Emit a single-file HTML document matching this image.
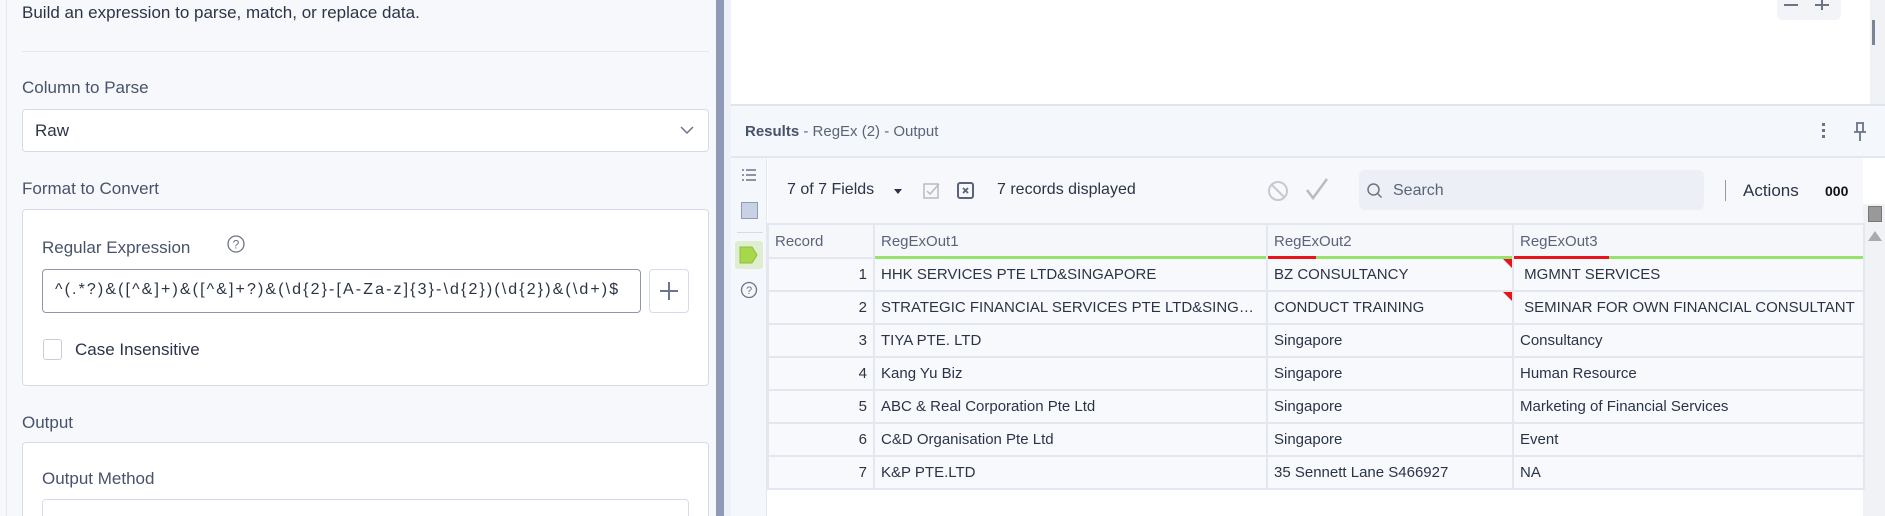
<!DOCTYPE html>
<html><head><style>
*{box-sizing:border-box;margin:0;padding:0}
html,body{width:1885px;height:516px;overflow:hidden}
body{position:relative;background:#fff;font-family:"Liberation Sans",sans-serif;color:#2b3446}
.a{position:absolute}
.lbl{font-size:17px;color:#48536a}
.box{position:absolute;background:#fff;border:1.5px solid #d5dbe8;border-radius:4px}
td{border:2px solid #e2e7f0;font-size:15px;height:33px;padding:0 6px;white-space:nowrap;overflow:hidden;color:#2b3446;background:#f8f9fc}
th{border:2px solid #e2e7f0;font-size:15px;height:34px;padding:0 6px;font-weight:normal;text-align:left;color:#5a6478;background:#f5f7fb;position:relative}
table{border-collapse:collapse;table-layout:fixed}
.ul{position:absolute;bottom:-2px;height:3px}
.tri{position:absolute;right:0;top:0;width:0;height:0;border-top:9px solid #e8141b;border-left:9px solid transparent}
</style></head><body>
<div class="a" style="left:0;top:0;width:716px;height:516px;background:#f6f8fc"></div>
<div class="a" style="left:6px;top:0;width:1px;height:516px;background:#e3e7ef"></div>
<div class="a" style="left:22px;top:3px;font-size:17px;color:#2b3446">Build an expression to parse, match, or replace data.</div>
<div class="a" style="left:22px;top:51px;width:687px;height:1px;background:#e3e7ef"></div>
<div class="a lbl" style="left:22px;top:78px">Column to Parse</div>
<div class="box" style="left:22px;top:109px;width:687px;height:43px"><span class="a" style="left:12px;top:11px;font-size:17px;color:#2b3446">Raw</span>
<svg class="a" style="right:14px;top:15px" width="14" height="10"><path d="M1 2l6 6 6-6" fill="none" stroke="#6b7488" stroke-width="1.5"/></svg></div>
<div class="a lbl" style="left:22px;top:179px">Format to Convert</div>
<div class="box" style="left:22px;top:209px;width:687px;height:177px"></div>
<div class="a lbl" style="left:42px;top:238px">Regular Expression</div>
<svg class="a" style="left:226px;top:234px" width="20" height="20"><circle cx="10" cy="10" r="8" fill="none" stroke="#6b7488" stroke-width="1.3"/><text x="10" y="14.5" font-size="12" text-anchor="middle" fill="#6b7488" font-family="Liberation Sans">?</text></svg>
<div class="box" style="left:42px;top:269px;width:599px;height:44px;border-color:#8e97aa;border-width:1.5px"><span class="a" style="left:12px;top:11px;font-size:16px;color:#2b3446;letter-spacing:2.1px;white-space:nowrap">^(.*?)&amp;([^&amp;]+)&amp;([^&amp;]+?)&amp;(\d{2}-[A-Za-z]{3}-\d{2})(\d{2})&amp;(\d+)$</span></div>
<div class="box" style="left:649px;top:269px;width:40px;height:44px"><svg class="a" style="left:9px;top:11px" width="20" height="20"><path d="M10 1v18M1 10h18" stroke="#6b7488" stroke-width="2"/></svg></div>
<div class="a" style="left:43px;top:339px;width:19px;height:21px;border:1.5px solid #c7cdd9;border-radius:3px;background:#fff"></div>
<div class="a lbl" style="left:75px;top:340px;color:#2b3446">Case Insensitive</div>
<div class="a lbl" style="left:22px;top:413px">Output</div>
<div class="box" style="left:22px;top:442px;width:687px;height:90px"></div>
<div class="a lbl" style="left:42px;top:469px">Output Method</div>
<div class="box" style="left:42px;top:499px;width:647px;height:40px"></div>
<div class="a" style="left:716px;top:0;width:8px;height:516px;background:#8f9ab6"></div>
<div class="a" style="left:724px;top:0;width:7px;height:516px;background:#eef1f7"></div>
<div class="a" style="left:1777px;top:0;width:64px;height:20px;background:#f2f4f8;border-radius:0 0 5px 5px"></div>
<div class="a" style="left:1784px;top:4px;width:14px;height:2px;background:#6b7488"></div>
<div class="a" style="left:1815px;top:4px;width:14px;height:2px;background:#6b7488"></div>
<div class="a" style="left:1821px;top:0;width:2px;height:10px;background:#6b7488"></div>
<div class="a" style="left:1870px;top:0;width:15px;height:105px;background:#f0f2f6"></div>
<div class="a" style="left:1872px;top:20px;width:3px;height:25px;background:#7b8396"></div>
<div class="a" style="left:731px;top:104px;width:1154px;height:2px;background:#dfe4ee"></div>
<div class="a" style="left:731px;top:106px;width:1154px;height:52px;background:#f4f7fb;border-bottom:2px solid #e2e7f0"></div>
<div class="a" style="left:745px;top:123px;font-size:15px;color:#5a6478"><b style="color:#48536a">Results</b> - RegEx (2) - Output</div>
<div class="a" style="left:1822px;top:123px;width:3px;height:3px;background:#6b7488;box-shadow:0 6px 0 #6b7488,0 12px 0 #6b7488"></div>
<svg class="a" style="left:1852px;top:121px" width="16" height="22"><path d="M4 2h8M5 2v9M11 2v9M2 11h12M8 11v9" stroke="#6b7488" stroke-width="1.8" fill="none"/></svg>
<div class="a" style="left:731px;top:158px;width:36px;height:358px;background:#f4f7fb;border-right:1px solid #e2e7f0"></div>
<svg class="a" style="left:741px;top:168px" width="16" height="14"><path d="M1 2h2M1 7h2M1 12h2M5 2h10M5 7h10M5 12h10" stroke="#6b7488" stroke-width="1.5"/></svg>
<div class="a" style="left:741px;top:202px;width:17px;height:17px;background:#c9d2e4;border:1px solid #8f9ab6"></div>
<div class="a" style="left:737px;top:232px;width:26px;height:1px;background:#d6dbe6"></div>
<div class="a" style="left:735px;top:241px;width:28px;height:28px;background:#dfeed0;border-radius:3px"></div>
<svg class="a" style="left:739px;top:245px" width="20" height="20"><path d="M1 2h12l5 8-5 8H1z" fill="#a6d84a" stroke="#8cbf3a"/></svg>
<svg class="a" style="left:740px;top:281px" width="18" height="18"><circle cx="9" cy="9" r="7.5" fill="none" stroke="#6b7488" stroke-width="1.3"/><text x="9" y="13" font-size="11" text-anchor="middle" fill="#6b7488" font-family="Liberation Sans">?</text></svg>
<div class="a" style="left:768px;top:158px;width:1095px;height:66px;background:#f6f8fc"></div>
<div class="a" style="left:787px;top:181px;font-size:16px;color:#2b3446">7 of 7 Fields</div>
<div class="a" style="left:894px;top:189px;border-top:5px solid #2b3446;border-left:4px solid transparent;border-right:4px solid transparent"></div>
<svg class="a" style="left:922px;top:181px" width="20" height="20"><rect x="2" y="3" width="14" height="14" fill="none" stroke="#bbb" stroke-width="1.5"/><path d="M5 10l3 3 9-10" fill="none" stroke="#bbb" stroke-width="1.5"/></svg>
<svg class="a" style="left:956px;top:181px" width="20" height="20"><rect x="2" y="2" width="15" height="15" rx="2" fill="none" stroke="#5a6478" stroke-width="2"/><path d="M7 7l5 5M12 7l-5 5" stroke="#5a6478" stroke-width="1.8"/></svg>
<div class="a" style="left:997px;top:181px;font-size:16px;color:#2b3446">7 records displayed</div>
<svg class="a" style="left:1266px;top:179px" width="24" height="24"><circle cx="12" cy="12" r="9" fill="none" stroke="#c5c9d1" stroke-width="2"/><path d="M6 6l12 12" stroke="#c5c9d1" stroke-width="2"/></svg>
<svg class="a" style="left:1305px;top:177px" width="24" height="24"><path d="M2 13l6 8L22 2" fill="none" stroke="#bbb" stroke-width="2.5"/></svg>
<div class="a" style="left:1359px;top:170px;width:345px;height:40px;background:#eceff5;border-radius:6px"></div>
<svg class="a" style="left:1366px;top:182px" width="18" height="18"><circle cx="7.5" cy="7.5" r="5.5" fill="none" stroke="#6b7488" stroke-width="1.5"/><path d="M11.5 11.5l4 4" stroke="#6b7488" stroke-width="1.5"/></svg>
<div class="a" style="left:1393px;top:182px;font-size:16px;color:#5a6478">Search</div>
<div class="a" style="left:1725px;top:180px;width:1px;height:21px;background:#999"></div>
<div class="a" style="left:1743px;top:181px;font-size:17px;color:#2b3446">Actions</div>
<div class="a" style="left:1825px;top:183px;font-size:14px;font-weight:bold;color:#111">000</div>
<div class="a" style="left:1863px;top:204px;width:22px;height:312px;background:#f0f2f6"></div>
<div class="a" style="left:1868px;top:206px;width:14px;height:16px;background:#999;border:1px solid #777"></div>
<div class="a" style="left:1868px;top:231px;border-bottom:10px solid #aaa;border-left:7px solid transparent;border-right:7px solid transparent"></div>
<table class="a" style="left:767px;top:223px;width:1096px">
<colgroup><col style="width:106px"><col style="width:393px"><col style="width:246px"><col style="width:351px"></colgroup>
<tr><th>Record</th><th>RegExOut1<div class="ul" style="left:0;right:0;background:#95e36c"></div></th><th>RegExOut2<div class="ul" style="left:0;width:48px;background:#e8141b"></div><div class="ul" style="left:48px;right:0;background:#95e36c"></div></th><th>RegExOut3<div class="ul" style="left:0;width:95px;background:#e8141b"></div><div class="ul" style="left:95px;right:0;background:#95e36c"></div></th></tr>
<tr><td style="text-align:right">1</td><td>HHK SERVICES PTE LTD&amp;SINGAPORE</td><td style="position:relative">BZ CONSULTANCY<div class="tri"></div></td><td>&nbsp;MGMNT SERVICES</td></tr>
<tr><td style="text-align:right">2</td><td>STRATEGIC FINANCIAL SERVICES PTE LTD&amp;SING…</td><td style="position:relative">CONDUCT TRAINING<div class="tri"></div></td><td>&nbsp;SEMINAR FOR OWN FINANCIAL CONSULTANT</td></tr>
<tr><td style="text-align:right">3</td><td>TIYA PTE. LTD</td><td>Singapore</td><td>Consultancy</td></tr>
<tr><td style="text-align:right">4</td><td>Kang Yu Biz</td><td>Singapore</td><td>Human Resource</td></tr>
<tr><td style="text-align:right">5</td><td>ABC &amp; Real Corporation Pte Ltd</td><td>Singapore</td><td>Marketing of Financial Services</td></tr>
<tr><td style="text-align:right">6</td><td>C&amp;D Organisation Pte Ltd</td><td>Singapore</td><td>Event</td></tr>
<tr><td style="text-align:right">7</td><td>K&amp;P PTE.LTD</td><td>35 Sennett Lane S466927</td><td>NA</td></tr>
</table>
</body></html>
